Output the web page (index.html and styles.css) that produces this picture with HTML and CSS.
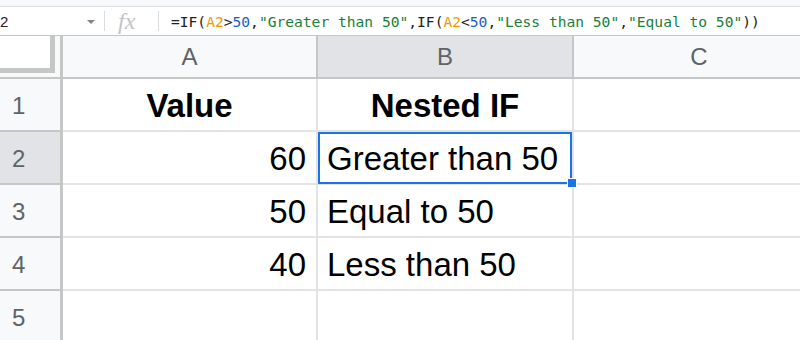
FILE: index.html
```html
<!DOCTYPE html>
<html lang="en">
<head>
    <meta charset="UTF-8">
    <meta name="viewport" content="width=device-width, initial-scale=1.0">
    <title>Nested IF</title>
    <link rel="stylesheet" href="styles.css">
</head>
<body>

<div class="top-strip"></div>

<div class="formula-bar">
    <div class="name-box">
        <span class="name">2</span>
        <span class="caret"></span>
    </div>
    <div class="sep"></div>
    <div class="fx">fx</div>
    <div class="sep"></div>
    <div class="formula">=IF(<span class="ref">A2</span>&gt;<span class="num">50</span>,<span class="str">"Greater than 50"</span>,IF(<span class="ref">A2</span>&lt;<span class="num">50</span>,<span class="str">"Less than 50"</span>,<span class="str">"Equal to 50"</span>))</div>
</div>

<div class="sheet">
    <div class="corner"><div class="freeze"></div></div>
    <div class="col-head">A</div>
    <div class="col-head active">B</div>
    <div class="col-head">C</div>

    <div class="row-head">1</div>
    <div class="cell bold center">Value</div>
    <div class="cell bold center">Nested IF</div>
    <div class="cell"></div>

    <div class="row-head active">2</div>
    <div class="cell right">60</div>
    <div class="cell selected">Greater than 50</div>
    <div class="cell"></div>

    <div class="row-head">3</div>
    <div class="cell right">50</div>
    <div class="cell">Equal to 50</div>
    <div class="cell"></div>

    <div class="row-head">4</div>
    <div class="cell right">40</div>
    <div class="cell">Less than 50</div>
    <div class="cell"></div>

    <div class="row-head">5</div>
    <div class="cell"></div>
    <div class="cell"></div>
    <div class="cell"></div>
</div>

</body>
</html>
```

FILE: styles.css
```css
* {
    box-sizing: border-box;
}
body {
    margin: 0;
    width: 800px;
    height: 340px;
    overflow: hidden;
    background: #fff;
    font-family: "Liberation Sans", Arial, sans-serif;
}
.top-strip {
    height: 7px;
    background: #f8f9fa;
    border-bottom: 1px solid #dadce0;
}
.formula-bar {
    display: flex;
    align-items: center;
    height: 29px;
    border-bottom: 1px solid #c7c7c7;
    background: #fff;
}
.name-box {
    width: 104px;
    display: flex;
    align-items: center;
    justify-content: space-between;
    padding-right: 9px;
    font-size: 15px;
    color: #202124;
}
.caret {
    width: 0;
    height: 0;
    border-left: 4px solid transparent;
    border-right: 4px solid transparent;
    border-top: 4px solid #80868b;
    margin-top: 2px;
}
.sep {
    width: 1px;
    height: 20px;
    background: #dadce0;
}
.fx {
    width: 53px;
    padding-left: 13px;
    font-family: "Liberation Serif", serif;
    font-style: italic;
    font-size: 24px;
    color: #c0c4c9;
    line-height: 1;
}
.formula {
    padding-left: 12px;
    font-family: "DejaVu Sans Mono", monospace;
    font-size: 14.6px;
    color: #202124;
    white-space: nowrap;
}
.ref {
    color: #f29900;
}
.num {
    color: #1a5fc8;
}
.str {
    color: #188038;
}
.sheet {
    display: grid;
    grid-template-columns: 63px 255px 256px 252px;
    grid-template-rows: 43px repeat(5, 53px);
}
.corner {
    background: #f8f9fa;
    border-right: 3px solid #c4c7c5;
    border-bottom: 2px solid #c4c7c5;
}
.freeze {
    width: 55px;
    height: 37px;
    background: #fff;
    border-right: 5px solid #c4c7c5;
    border-bottom: 5px solid #c4c7c5;
}
.col-head {
    display: flex;
    align-items: center;
    justify-content: center;
    background: #f8f9fa;
    border-right: 2px solid #c4c7c5;
    border-bottom: 2px solid #c4c7c5;
    font-size: 24px;
    color: #5f6368;
}
.row-head {
    display: flex;
    align-items: center;
    width: 63px;
    padding-top: 2px;
    background: #f8f9fa;
    border-right: 3px solid #c4c7c5;
    border-bottom: 2px solid #c4c7c5;
    font-size: 24px;
    color: #5f6368;
}
.row-head, .col-head.active {
    text-indent: 0;
}
.row-head {
    justify-content: flex-start;
    padding-left: 12px;
}
.active {
    background: #e1e3e6;
}
.cell {
    position: relative;
    display: flex;
    align-items: center;
    padding: 2px 10px 0 9px;
    border-right: 2px solid #e2e3e3;
    border-bottom: 2px solid #e2e3e3;
    font-size: 33px;
    color: #000;
    white-space: nowrap;
}
.bold {
    font-weight: bold;
}
.center {
    justify-content: center;
    padding-left: 0;
    padding-right: 0;
}
.right {
    justify-content: flex-end;
}
.selected::after {
    content: "";
    position: absolute;
    top: 0;
    left: 0;
    right: 0;
    bottom: -1px;
    border: 2px solid #1a73e8;
}
.selected::before {
    content: "";
    position: absolute;
    right: -5px;
    bottom: -5px;
    width: 8px;
    height: 8px;
    background: #1a73e8;
    border: 1px solid #fff;
    z-index: 1;
}
```
